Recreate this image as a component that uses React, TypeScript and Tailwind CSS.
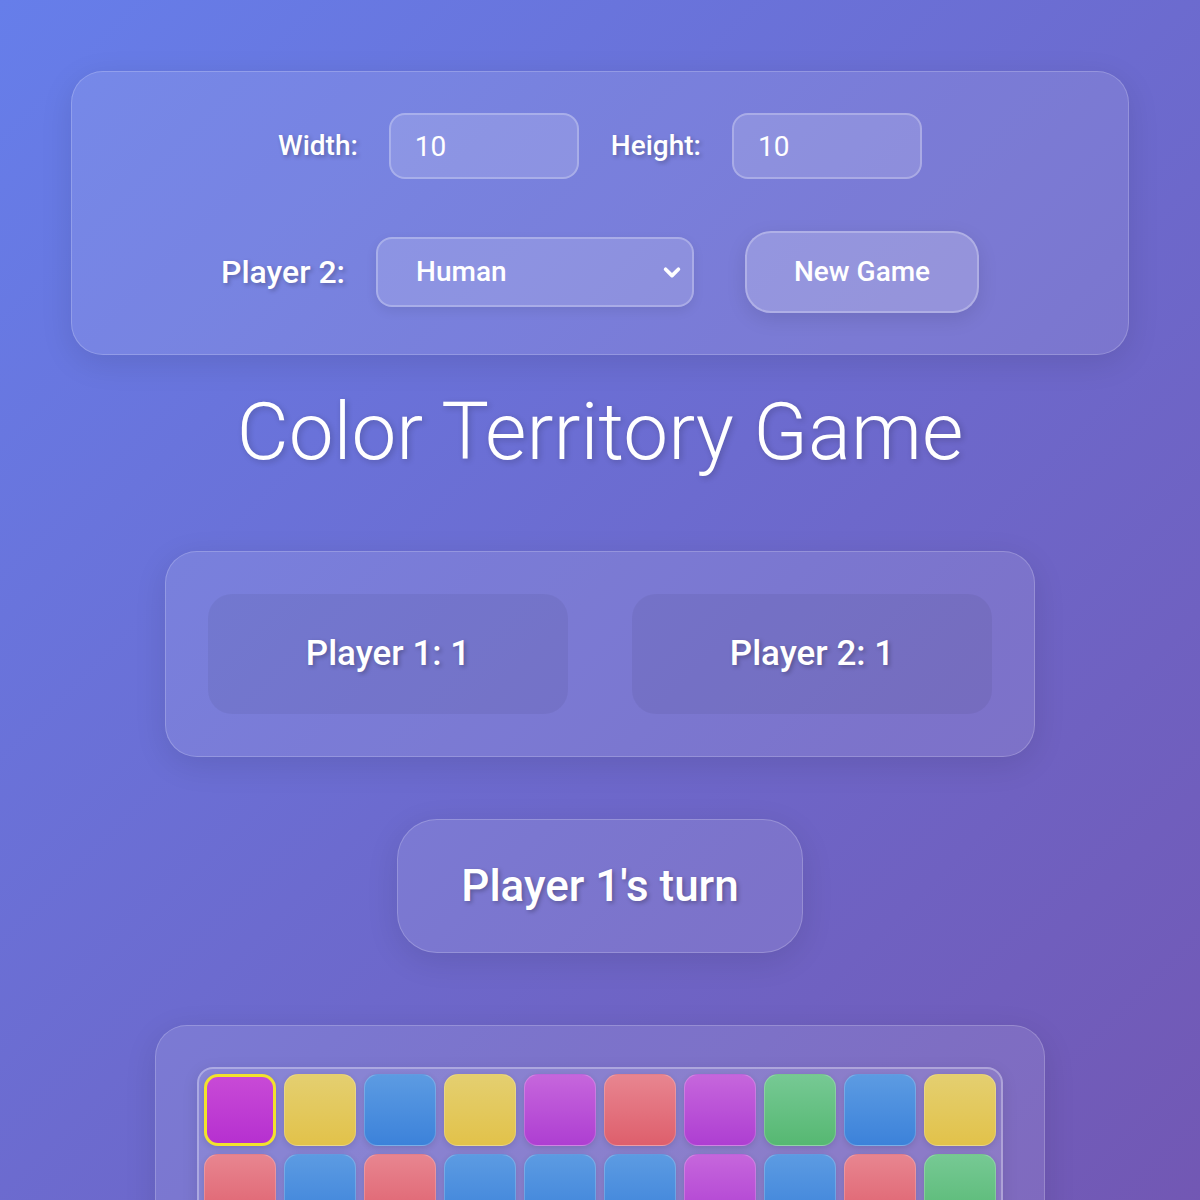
import { useState } from "react";

type Cell = "purple" | "yellow" | "blue" | "red" | "green";

const cellStyles: Record<Cell, string> = {
  purple: "bg-[linear-gradient(180deg,#c666dc_0%,#ae3ed2_100%)]",
  yellow: "bg-[linear-gradient(180deg,#e4cf70_0%,#e2c24a_100%)]",
  blue: "bg-[linear-gradient(180deg,#5c9be2_0%,#3c82da_100%)]",
  red: "bg-[linear-gradient(180deg,#e88590_0%,#de5f6c_100%)]",
  green: "bg-[linear-gradient(180deg,#76c994_0%,#56b872_100%)]",
};

const rows: Cell[][] = [
  ["purple", "yellow", "blue", "yellow", "purple", "red", "purple", "green", "blue", "yellow"],
  ["red", "blue", "red", "blue", "blue", "blue", "purple", "blue", "red", "green"],
  ["green", "yellow", "purple", "red", "green", "yellow", "blue", "purple", "yellow", "red"],
  ["blue", "purple", "green", "yellow", "red", "purple", "green", "red", "blue", "purple"],
  ["yellow", "red", "blue", "green", "purple", "blue", "yellow", "green", "purple", "blue"],
  ["purple", "green", "yellow", "blue", "red", "green", "red", "yellow", "green", "red"],
  ["red", "blue", "purple", "yellow", "blue", "purple", "blue", "purple", "red", "yellow"],
  ["green", "yellow", "red", "purple", "green", "red", "yellow", "blue", "yellow", "green"],
  ["blue", "purple", "green", "red", "yellow", "blue", "green", "red", "purple", "blue"],
  ["yellow", "red", "blue", "green", "purple", "yellow", "purple", "green", "blue", "purple"],
];

const shadowText = "[text-shadow:2px_2px_4px_rgba(0,0,0,0.25)]";

export default function App() {
  const [width, setWidth] = useState("10");
  const [height, setHeight] = useState("10");
  const [opponent, setOpponent] = useState("human");

  return (
    <div className="min-h-screen bg-[linear-gradient(135deg,#667eea_0%,#764ba2_100%)] pt-[71px] pb-16 font-['Roboto',sans-serif] text-white">
      {/* settings */}
      <div className="mx-auto w-[1058px] rounded-[32px] border border-white/20 bg-white/10 p-[41px] shadow-[0_8px_32px_rgba(0,0,0,0.1)]">
        <div className="flex h-[66px] items-center justify-center">
          <label className={`text-[28px] font-medium ${shadowText}`}>Width:</label>
          <input
            value={width}
            onChange={(e) => setWidth(e.target.value)}
            className="ml-[31px] h-[66px] w-[190px] rounded-[16px] border-2 border-white/25 bg-white/15 pl-[24px] text-[28px] text-white outline-none"
          />
          <label className={`ml-[32px] text-[28px] font-medium ${shadowText}`}>Height:</label>
          <input
            value={height}
            onChange={(e) => setHeight(e.target.value)}
            className="ml-[31px] h-[66px] w-[190px] rounded-[16px] border-2 border-white/25 bg-white/15 pl-[24px] text-[28px] text-white outline-none"
          />
        </div>
        <div className="mt-[52px] flex h-[82px] items-center justify-center">
          <label className={`text-[32px] font-medium ${shadowText}`}>Player 2:</label>
          <div className="relative ml-[31px]">
            <select
              value={opponent}
              onChange={(e) => setOpponent(e.target.value)}
              className="h-[70px] w-[318px] appearance-none rounded-[16px] border-2 border-white/25 bg-white/15 pl-[38px] text-[28px] font-medium text-white shadow-[0_4px_12px_rgba(0,0,0,0.08)] outline-none"
            >
              <option value="human" className="text-black">Human</option>
              <option value="ai" className="text-black">Computer</option>
            </select>
            <svg
              className="pointer-events-none absolute right-[11px] top-1/2 h-[22px] w-[22px] -translate-y-1/2"
              viewBox="0 0 24 24"
              fill="none"
              stroke="white"
              strokeWidth="4"
              strokeLinecap="round"
              strokeLinejoin="round"
            >
              <path d="M5 9l7 7 7-7" />
            </svg>
          </div>
          <button className="ml-[51px] h-[82px] w-[234px] rounded-[26px] border-2 border-white/25 bg-white/20 text-[28px] font-medium text-white shadow-[0_6px_20px_rgba(0,0,0,0.1)]">
            New Game
          </button>
        </div>
      </div>

      <h1 className={`mt-[37px] text-center text-[80px] font-light leading-none [text-shadow:2px_2px_6px_rgba(0,0,0,0.2)]`}>
        Color Territory Game
      </h1>

      {/* scores */}
      <div className="mx-auto mt-[79px] flex w-[870px] gap-[64px] rounded-[32px] border border-white/20 bg-white/10 p-[42px] shadow-[0_8px_32px_rgba(0,0,0,0.1)]">
        <div className={`flex h-[120px] w-[360px] items-center justify-center rounded-[24px] bg-black/5 text-[35px] font-medium ${shadowText}`}>
          Player 1: 1
        </div>
        <div className={`flex h-[120px] w-[360px] items-center justify-center rounded-[24px] bg-black/5 text-[35px] font-medium ${shadowText}`}>
          Player 2: 1
        </div>
      </div>

      {/* turn */}
      <div className="mt-[62px] flex justify-center">
        <div className={`flex h-[134px] w-[406px] items-center justify-center rounded-[40px] border border-white/20 bg-white/10 text-[44px] font-medium shadow-[0_8px_32px_rgba(0,0,0,0.1)] ${shadowText}`}>
          Player 1's turn
        </div>
      </div>

      {/* board */}
      <div className="mx-auto mt-[72px] w-[890px] rounded-[32px] border border-white/20 bg-white/10 p-[41px] shadow-[0_8px_32px_rgba(0,0,0,0.1)]">
        <div className="rounded-[16px] border-2 border-white/30 bg-white/10 p-[5px] shadow-[0_4px_16px_rgba(0,0,0,0.1)]">
          <div className="grid grid-cols-10 gap-[8px]">
            {rows.map((row, r) =>
              row.map((c, i) => (
                <div
                  key={`${r}-${i}`}
                  className={`h-[72px] w-[72px] rounded-[14px] shadow-[0_2px_6px_rgba(0,0,0,0.12)] ${cellStyles[c]} ${
                    r === 0 && i === 0
                      ? "border-[3px] border-[#f2e22c] !bg-[linear-gradient(180deg,#c84ad6_0%,#b630d0_100%)]"
                      : "border border-white/20"
                  }`}
                />
              ))
            )}
          </div>
        </div>
      </div>
    </div>
  );
}
